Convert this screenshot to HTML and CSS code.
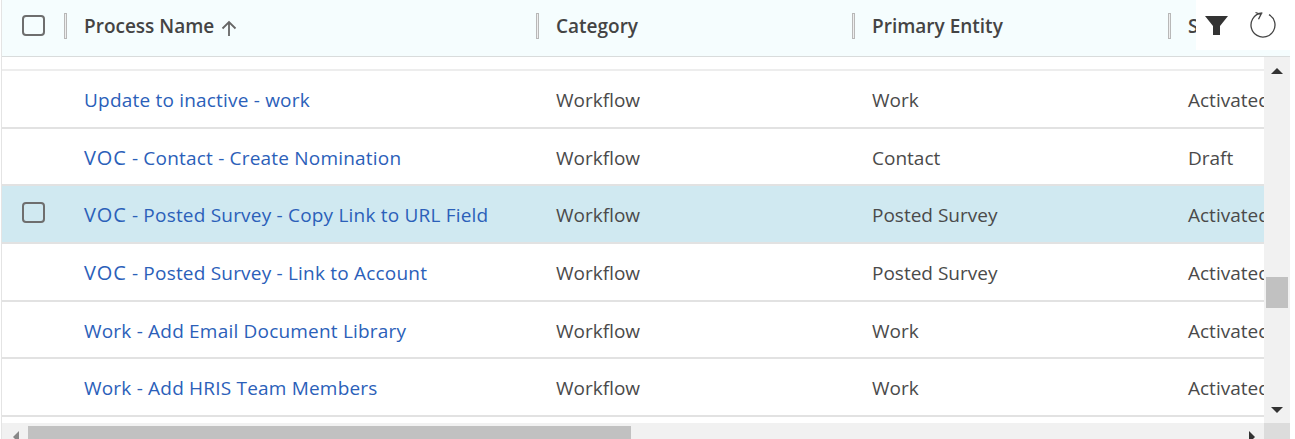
FILE: index.html
```html
<!DOCTYPE html>
<html lang="en">
<head>
<meta charset="utf-8">
<title>Processes</title>
<link rel="stylesheet" href="styles.css">
</head>
<body>
<div class="grid">
  <div class="head">
    <div class="c-check"><span class="box"></span></div>
    <div class="hcell c-name"><span class="sep first"></span><span>Process Name</span>
      <svg class="arrow" width="16" height="16" viewBox="0 0 16 16"><path d="M8 16V2M1.500 8.500L8 2l6.500 6.500" fill="none" stroke="#666" stroke-width="1.800"/></svg>
    </div>
    <div class="hcell c-cat"><span class="sep"></span><span>Category</span></div>
    <div class="hcell c-ent"><span class="sep"></span><span>Primary Entity</span></div>
    <div class="hcell c-stat"><span class="sep"></span><span>Status</span></div>
    <div class="tools">
      <svg width="24" height="20" viewBox="0 0 24 20"><path d="M1 1h23L16 11v9H9V11z" fill="#333"/></svg>
      <svg width="28" height="28" viewBox="0 0 28 28"><circle cx="14" cy="14" r="12" fill="none" stroke="#444" stroke-width="1.300" stroke-dasharray="68 8" transform="rotate(-60 14 14)"/><path d="M6.500 1.500l5.500 1.800-2.500 5" fill="none" stroke="#444" stroke-width="1.300"/></svg>
    </div>
  </div>
  <div class="main">
    <div class="rows">
      <div class="spacer"></div>
      <div class="row"><div class="c-check"></div><a class="cell c-name">Update to inactive - work</a><div class="cell c-cat">Workflow</div><div class="cell c-ent">Work</div><div class="cell c-stat">Activated</div></div>
      <div class="row"><div class="c-check"></div><a class="cell c-name"><span class="voc">VOC</span> - Contact - Create Nomination</a><div class="cell c-cat">Workflow</div><div class="cell c-ent">Contact</div><div class="cell c-stat">Draft</div></div>
      <div class="row selected"><div class="c-check"><span class="box"></span></div><a class="cell c-name"><span class="voc">VOC</span> - Posted Survey - Copy Link to URL Field</a><div class="cell c-cat">Workflow</div><div class="cell c-ent">Posted Survey</div><div class="cell c-stat">Activated</div></div>
      <div class="row"><div class="c-check"></div><a class="cell c-name"><span class="voc">VOC</span> - Posted Survey - Link to Account</a><div class="cell c-cat">Workflow</div><div class="cell c-ent">Posted Survey</div><div class="cell c-stat">Activated</div></div>
      <div class="row"><div class="c-check"></div><a class="cell c-name">Work - Add Email Document Library</a><div class="cell c-cat">Workflow</div><div class="cell c-ent">Work</div><div class="cell c-stat">Activated</div></div>
      <div class="row"><div class="c-check"></div><a class="cell c-name">Work - Add HRIS Team Members</a><div class="cell c-cat">Workflow</div><div class="cell c-ent">Work</div><div class="cell c-stat">Activated</div></div>
    </div>
    <div class="vbar">
      <span class="tri-up"></span>
      <span class="vthumb"></span>
      <span class="tri-down"></span>
    </div>
  </div>
  <div class="hbar">
    <div class="htrack">
      <span class="tri-left"></span>
      <span class="hthumb"></span>
      <span class="tri-right"></span>
    </div>
    <div class="corner"></div>
  </div>
</div>
</body>
</html>
```
FILE: styles.css
```css
* { box-sizing: border-box; }
html, body { margin: 0; height: 100%; background: #fff; overflow: hidden; }
body { font-family: "Open Sans", "Noto Sans", sans-serif; font-size: 19px; line-height: 26px; color: #4a4a4a; }
.grid { width: 1289px; height: 439px; margin-left: 1px; border-left: 1px solid #e4e4e4; display: flex; flex-direction: column; }
.head { position: relative; height: 57px; flex: none; display: flex; align-items: center; background: #f5fdfe; border-bottom: 1px solid #d9dcdc; font-weight: 600; color: #444; }
.c-check { width: 62px; flex: none; display: flex; align-items: center; padding-left: 20px; }
.c-name { width: 472px; flex: none; }
.c-cat { width: 316px; flex: none; }
.c-ent { width: 316px; flex: none; }
.c-stat { flex: 1; min-width: 0; }
.box { width: 23px; height: 21px; border: 2px solid #6e6e6e; border-radius: 4px; display: block; }
.head .c-check { padding-bottom: 5px; }
.hcell { display: flex; align-items: center; height: 100%; white-space: nowrap; overflow: hidden; padding-bottom: 4px; }
.sep { width: 3px; height: 26px; flex: none; border: 1px solid #b8b8b8; background: #eee; margin-right: 17px; }
.c-name.hcell { width: 472px; }
.arrow { margin-left: 7px; margin-top: 3px; }
.tools { position: absolute; right: 0; top: 0; width: 94px; height: 50px; background: #fff; display: flex; align-items: center; gap: 21px; padding-left: 8px; }
.main { flex: 1; min-height: 0; display: flex; }
.rows { flex: 1; min-width: 0; overflow: hidden; }
.spacer { height: 14px; border-bottom: 2px solid #ededed; }
.row { height: 57.700px; display: flex; align-items: center; border-bottom: 2px solid #e2e2e2; white-space: nowrap; padding-top: 2px; }
.row.selected { background: #d0e9f1; }
.cell { overflow: hidden; padding-left: 20px; }
.c-name.cell { width: 472px; padding-left: 20px; color: #2b60b9; letter-spacing: .2px; }
.voc { font-size: 20px; line-height: 1; letter-spacing: .9px; }
.row .c-check { padding-bottom: 6px; }
.vbar { width: 26px; flex: none; background: #f1f1f1; display: flex; flex-direction: column; align-items: center; }
.tri-up { width: 0; height: 0; border: 6px solid transparent; border-top: 0; border-bottom: 6px solid #333; margin-top: 11px; }
.vthumb { width: 22px; height: 31px; background: #c1c1c1; margin-top: 203px; }
.tri-down { width: 0; height: 0; border: 6px solid transparent; border-bottom: 0; border-top: 6px solid #333; margin-top: auto; margin-bottom: 10px; }
.hbar { height: 16px; flex: none; display: flex; overflow: hidden; }
.htrack { flex: 1; background: #f1f1f1; display: flex; align-items: flex-start; }
.tri-left { width: 0; height: 0; border: 6px solid transparent; border-left: 0; border-right: 6px solid #888; margin-left: 11px; margin-top: 8px; }
.hthumb { width: 603px; height: 13px; background: #c1c1c1; margin-left: 9px; margin-top: 3px; }
.tri-right { width: 0; height: 0; border: 6px solid transparent; border-right: 0; border-left: 6px solid #333; margin-left: auto; margin-right: 9px; margin-top: 8px; }
.corner { width: 26px; background: #dcdcdc; }
```
